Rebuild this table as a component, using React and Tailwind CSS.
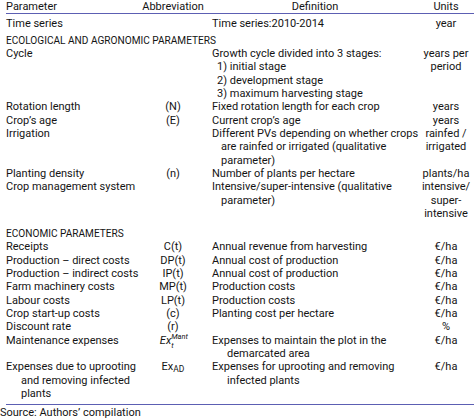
import React from 'react';

// Each row: parameter lines, abbreviation, definition lines, unit lines
const rows = [
  { kind: 'row', param: ['Time series'], abbr: '', def: ['Time series:2010-2014'], units: ['year'], pt: 'pt-[2.5px]' },
  { kind: 'section', label: 'ECOLOGICAL AND AGRONOMIC PARAMETERS', pt: 'pt-[4px]' },
  {
    kind: 'row',
    param: ['Cycle'],
    abbr: '',
    def: [
      { t: 'Growth cycle divided into 3 stages:' },
      { t: '1) initial stage', i: 'pl-[5px]' },
      { t: '2) development stage', i: 'pl-[5px]' },
      { t: '3) maximum harvesting stage', i: 'pl-[5px]' },
    ],
    units: ['years per', 'period'],
  },
  { kind: 'row', param: ['Rotation length'], abbr: '(N)', def: ['Fixed rotation length for each crop'], units: ['years'] },
  { kind: 'row', param: ['Crop’s age'], abbr: '(E)', def: ['Current crop’s age'], units: ['years'] },
  {
    kind: 'row',
    param: ['Irrigation'],
    abbr: '',
    def: [
      { t: 'Different PVs depending on whether crops' },
      { t: 'are rainfed or irrigated (qualitative', i: 'pl-[9px]' },
      { t: 'parameter)', i: 'pl-[9px]' },
    ],
    units: ['rainfed /', 'irrigated'],
  },
  { kind: 'row', param: ['Planting density'], abbr: '(n)', def: ['Number of plants per hectare'], units: ['plants/ha'] },
  {
    kind: 'row',
    param: ['Crop management system'],
    abbr: '',
    def: [
      { t: 'Intensive/super-intensive (qualitative' },
      { t: 'parameter)', i: 'pl-[9px]' },
    ],
    units: ['intensive/', 'super-', 'intensive'],
  },
  { kind: 'section', label: 'ECONOMIC PARAMETERS', pt: 'pt-[6.5px]' },
  { kind: 'row', param: ['Receipts'], abbr: 'C(t)', def: ['Annual revenue from harvesting'], units: ['€/ha'] },
  { kind: 'row', param: ['Production – direct costs'], abbr: 'DP(t)', def: ['Annual cost of production'], units: ['€/ha'] },
  { kind: 'row', param: ['Production – indirect costs'], abbr: 'IP(t)', def: ['Annual cost of production'], units: ['€/ha'] },
  { kind: 'row', param: ['Farm machinery costs'], abbr: 'MP(t)', def: ['Production costs'], units: ['€/ha'] },
  { kind: 'row', param: ['Labour costs'], abbr: 'LP(t)', def: ['Production costs'], units: ['€/ha'] },
  { kind: 'row', param: ['Crop start-up costs'], abbr: '(c)', def: ['Planting cost per hectare'], units: ['€/ha'] },
  { kind: 'row', param: ['Discount rate'], abbr: '(r)', def: [''], units: ['%'] },
  {
    kind: 'row',
    param: ['Maintenance expenses'],
    abbr: 'mant',
    def: [
      { t: 'Expenses to maintain the plot in the' },
      { t: 'demarcated area', i: 'pl-[15px]' },
    ],
    units: ['€/ha'],
  },
  {
    kind: 'row',
    param: [
      { t: 'Expenses due to uprooting' },
      { t: 'and removing infected', i: 'pl-[15px]' },
      { t: 'plants', i: 'pl-[15px]' },
    ],
    abbr: 'ad',
    def: [
      { t: 'Expenses for uprooting and removing' },
      { t: 'infected plants', i: 'pl-[15px]' },
    ],
    units: ['€/ha'],
  },
];

const Lines = ({ items }) =>
  items.map((it, i) => {
    const line = typeof it === 'string' ? { t: it } : it;
    return (
      <div key={i} className={`whitespace-nowrap ${line.i || ''}`}>
        {line.t || '\u00a0'}
      </div>
    );
  });

const Abbr = ({ value }) => {
  if (value === 'mant') {
    return (
      <span className="italic">
        Ex
        <span className="relative inline-block w-0">
          <span className="absolute left-0 top-[-11px] text-[7.5px] leading-none">Mant</span>
          <span className="absolute left-0 top-[-2px] text-[7.5px] leading-none">t</span>
        </span>
        <span className="inline-block w-[15px]" />
      </span>
    );
  }
  if (value === 'ad') {
    return (
      <span>
        Ex<span className="relative top-[2px] text-[8.5px]">AD</span>
      </span>
    );
  }
  return value;
};

export default function App() {
  return (
    <div
      className="w-[474px] h-[418px] overflow-hidden bg-white text-[#141414] text-[11px] leading-[13.33px]"
      style={{ fontFamily: 'Roboto, "Liberation Sans", sans-serif' }}
    >
      <div className="pl-[6px]">
        {/* header */}
        <div className="border-b-[1.5px] border-[#5c5fb3] grid grid-cols-[136px_62px_214px_56px] leading-[13px]">
          <div>Parameter</div>
          <div className="text-center">Abbreviation</div>
          <div className="text-center pl-[8px]">Definition</div>
          <div className="text-center">Units</div>
        </div>

        {rows.map((r, i) =>
          r.kind === 'section' ? (
            <div key={i} className={`${r.pt} text-[10.1px]`}>
              {r.label}
            </div>
          ) : (
            <div key={i} className={`grid grid-cols-[136px_62px_214px_56px] ${r.pt || ''}`}>
              <div>
                <Lines items={r.param} />
              </div>
              <div className="text-center whitespace-nowrap">
                <Abbr value={r.abbr} />
              </div>
              <div className="pl-[8px]">
                <Lines items={r.def} />
              </div>
              <div className="text-center">
                <Lines items={r.units} />
              </div>
            </div>
          )
        )}

        <div className="mt-[4px] border-b-[1.5px] border-[#5c5fb3]" />
      </div>
      <div className="pt-[1px]">Source: Authors’ compilation</div>
    </div>
  );
}
